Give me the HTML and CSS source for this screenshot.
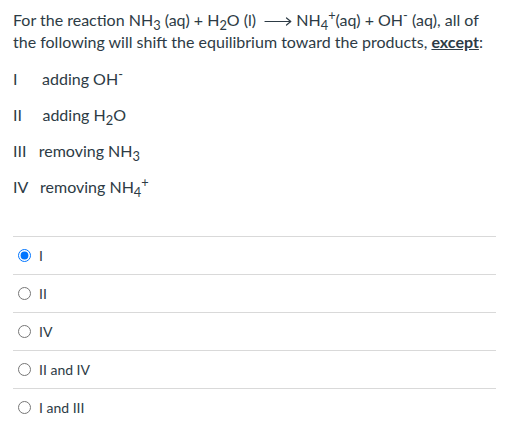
FILE: index.html
```html
<!DOCTYPE html>
<html>
<head>
<meta charset="utf-8">
<link rel="stylesheet" href="styles.css">
</head>
<body>
<div class="question">
  <p class="qtext">For the reaction NH<sub>3</sub> (aq) + H<sub>2</sub>O (l) <svg class="arrow" width="28" height="10" viewBox="0 0 28 10" aria-label="yields"><path d="M1 5.5H26.5M22.5 2L26.8 5.5L22.5 9" fill="none" stroke="#2d3b45" stroke-width="1.2" stroke-linejoin="round" stroke-linecap="round"/></svg> NH<sub>4</sub><sup>+</sup>(aq) + OH<sup>-</sup> (aq), all of the following will shift the equilibrium toward the products, <strong class="emph">except</strong>:</p>
  <p class="item">I&nbsp;&nbsp;&nbsp;&nbsp;&nbsp; adding OH<sup>-</sup></p>
  <p class="item">II&nbsp;&nbsp;&nbsp;&nbsp; adding H<sub>2</sub>O</p>
  <p class="item">III&nbsp;&nbsp; removing NH<sub>3</sub></p>
  <p class="item">IV&nbsp;&nbsp; removing NH<sub>4</sub><sup>+</sup></p>
</div>
<div class="answers">
  <label class="answer"><input type="radio" name="ans" checked><span class="atext">I</span></label>
  <label class="answer"><input type="radio" name="ans"><span class="atext">II</span></label>
  <label class="answer"><input type="radio" name="ans"><span class="atext">IV</span></label>
  <label class="answer"><input type="radio" name="ans"><span class="atext">II and IV</span></label>
  <label class="answer"><input type="radio" name="ans"><span class="atext">I and III</span></label>
</div>
</body>
</html>
```

FILE: styles.css
```css
html, body {
  margin: 0;
  padding: 0;
  background: #ffffff;
}
body {
  font-family: Lato, "Noto Sans", sans-serif;
  color: #2d3b45;
  padding: 0 15px 0 13px;
}
.question {
  padding-top: 9px;
}
.question p {
  margin: 0;
  font-size: 16px;
  line-height: 22.4px;
}
.qtext {
  margin-bottom: 14px !important;
}
.item {
  margin-bottom: 13.6px !important;
}
sub, sup {
  line-height: 0;
  font-size: 0.8em;
}
.arrow {
  vertical-align: 0;
  margin-left: 4px;
  margin-right: 0;
}
.emph {
  font-weight: 700;
  text-decoration: underline;
}
.answers {
  margin-top: 38px;
}
.answer {
  display: flex;
  align-items: center;
  height: 37px;
  border-top: 1px solid #d9d9d9;
  font-size: 14px;
}
.answer input {
  margin: 0 0 0 5px;
  width: 13px;
  height: 13px;
}
.atext {
  margin-left: 8px;
}
```
